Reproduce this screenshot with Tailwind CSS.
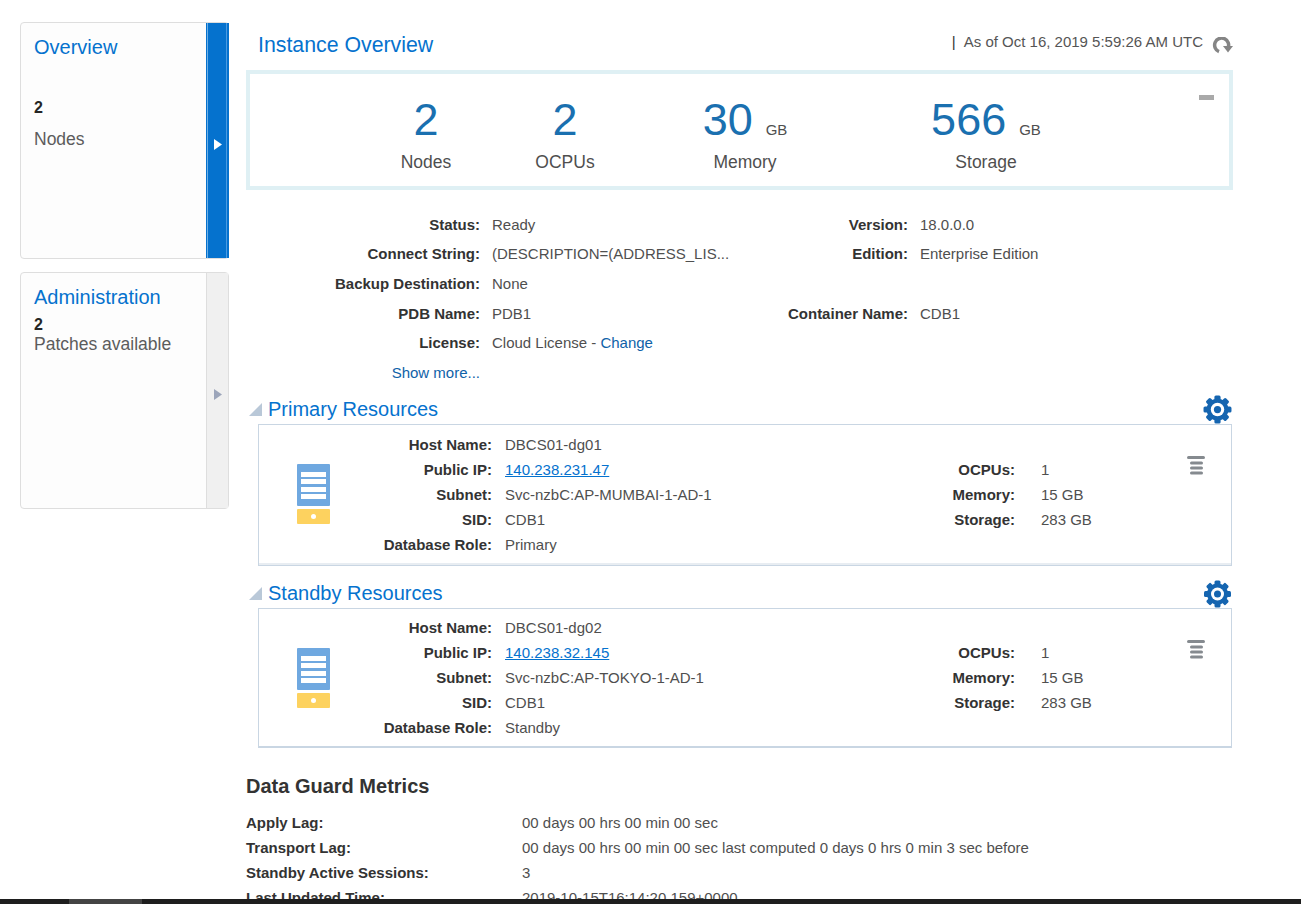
<!DOCTYPE html>
<html lang="en">

<head>
    <meta charset="UTF-8">
    <title>Instance Overview</title>
    <script src="https://cdn.jsdelivr.net/npm/@tailwindcss/browser@4"></script>
</head>

<body class="bg-white">
    <div class="relative flex h-[904px] w-[1301px] overflow-hidden bg-white font-['Liberation_Sans',Arial,sans-serif] text-[15px] text-[#4f4f4f]">

        <!-- side tabs -->
        <div class="ml-5 mt-[22px] flex w-[209px] shrink-0 flex-col gap-[13px]">
            <div class="flex h-[237px] rounded-sm border border-[#dedede] bg-[#fdfdfd]">
                <div class="flex-1 pl-[13px]">
                    <div class="mt-[12px] text-[20px] leading-6 text-[#0572ce]">Overview</div>
                    <div class="mt-[39px] text-[16px] leading-5 font-bold text-[#252525]">2</div>
                    <div class="mt-[11px] text-[17.5px] leading-5 text-[#5c5c5c]">Nodes</div>
                </div>
                <div class="-mr-px flex w-[23px] items-center justify-center bg-[#0572ce] pt-2 shadow-[inset_1px_0_0_#0572ce,inset_2px_0_0_#6fb0e6,inset_-2px_0_0_#0572ce,inset_-3px_0_0_#4b9ae0]">
                    <svg width="8" height="11" viewBox="0 0 8 11"><path d="M0 0 L8 5.5 L0 11 Z" fill="#fff" /></svg>
                </div>
            </div>
            <div class="flex h-[237px] rounded-sm border border-[#dedede] bg-[#fdfdfd]">
                <div class="flex-1 pl-[13px]">
                    <div class="mt-[12px] text-[20px] leading-6 text-[#0572ce]">Administration</div>
                    <div class="mt-[6px] text-[16px] leading-5 font-bold text-[#252525]">2</div>
                    <div class="-mt-px text-[17.5px] leading-5 text-[#5c5c5c]">Patches available</div>
                </div>
                <div class="flex w-[22px] items-center justify-center border-l border-[#dedede] bg-[#f0f0f0] pt-2">
                    <svg width="8" height="11" viewBox="0 0 8 11"><path d="M0 0 L8 5.5 L0 11 Z" fill="#9ca5ba" /></svg>
                </div>
            </div>
        </div>

        <!-- main -->
        <div class="ml-[17px] mt-[22px] w-[987px] shrink-0">
            <div class="flex h-[48px] items-start justify-between pl-3">
                <div class="mt-[11px] text-[21.3px] leading-6 text-[#0572ce]">Instance Overview</div>
                <div class="mt-[11px] flex text-[15px] leading-[18px] text-[#555]">
                    <span class="text-[#333]">|</span>
                    <span class="ml-2">As of Oct 16, 2019 5:59:26 AM UTC</span>
                    <svg class="ml-[9px] mt-[4px]" width="21" height="17" viewBox="0 0 21 17">
                        <path d="M16 11 A7 7 0 1 0 7 14.6" fill="none" stroke="#858585" stroke-width="3.5" />
                        <path d="M11 9 L21 9 L16 15.5 Z" fill="#858585" />
                    </svg>
                </div>
            </div>

            <div class="relative flex h-[120px] border-[4px] border-[#dff0f4] pl-[136px] text-[17.5px]">
                <div class="w-[80px] text-center">
                    <div class="mt-[17px] h-[61px] text-[45px] leading-[58px] text-[#1a70b0]">2</div>
                    <div class="leading-5">Nodes</div>
                </div>
                <div class="ml-[59px] w-[80px] text-center">
                    <div class="mt-[17px] h-[61px] text-[45px] leading-[58px] text-[#1a70b0]">2</div>
                    <div class="leading-5">OCPUs</div>
                </div>
                <div class="ml-[90px] w-[100px] text-center">
                    <div class="mt-[17px] h-[61px] whitespace-nowrap text-[45px] leading-[58px] text-[#1a70b0]">30<span class="ml-[13px] text-[15px] leading-none text-[#4f4f4f]">GB</span></div>
                    <div class="leading-5">Memory</div>
                </div>
                <div class="ml-[131px] w-[120px] text-center">
                    <div class="mt-[17px] h-[61px] whitespace-nowrap text-[45px] leading-[58px] text-[#1a70b0]">566<span class="ml-[13px] text-[15px] leading-none text-[#4f4f4f]">GB</span></div>
                    <div class="leading-5">Storage</div>
                </div>
                <div class="absolute right-[15px] top-[21px] h-[5px] w-[15px] bg-[#a9a9a9]"></div>
            </div>

            <!-- instance details -->
            <div class="mt-5">
                <div class="flex h-[29.7px] items-center">
                    <div class="w-[234px] text-right font-bold text-[#333]">Status:</div>
                    <div class="ml-3 w-[250px]">Ready</div>
                    <div class="w-[166px] text-right font-bold text-[#333]">Version:</div>
                    <div class="ml-3">18.0.0.0</div>
                </div>
                <div class="flex h-[29.7px] items-center">
                    <div class="w-[234px] text-right font-bold text-[#333]">Connect String:</div>
                    <div class="ml-3 w-[250px] whitespace-nowrap">(DESCRIPTION=(ADDRESS_LIS...</div>
                    <div class="w-[166px] text-right font-bold text-[#333]">Edition:</div>
                    <div class="ml-3">Enterprise Edition</div>
                </div>
                <div class="flex h-[29.7px] items-center">
                    <div class="w-[234px] text-right font-bold text-[#333]">Backup Destination:</div>
                    <div class="ml-3">None</div>
                </div>
                <div class="flex h-[29.7px] items-center">
                    <div class="w-[234px] text-right font-bold text-[#333]">PDB Name:</div>
                    <div class="ml-3 w-[250px]">PDB1</div>
                    <div class="w-[166px] text-right font-bold text-[#333]">Container Name:</div>
                    <div class="ml-3">CDB1</div>
                </div>
                <div class="flex h-[29.7px] items-center">
                    <div class="w-[234px] text-right font-bold text-[#333]">License:</div>
                    <div class="ml-3">Cloud License - <span class="text-[#0f62a8]">Change</span></div>
                </div>
                <div class="flex h-[29.7px] items-center">
                    <div class="w-[234px] text-right text-[#0f62a8]">Show more...</div>
                </div>
            </div>

            <!-- primary -->
            <div class="mt-[6.8px] flex h-[29px] items-center justify-between pl-[3px]">
                <div class="flex items-center">
                    <svg width="13" height="13" viewBox="0 0 13 13"><path d="M13 0 L13 13 L0 13 Z" fill="#b9c8d8" /></svg>
                    <span class="ml-[6px] text-[20px] leading-6 text-[#0572ce]">Primary Resources</span>
                </div>
                <svg class="mr-[1px]" width="29" height="29" viewBox="0 0 28 28">
                    <g fill="#1565b0">
                        <circle cx="14" cy="14" r="10.5" />
                        <rect x="11" y="0.5" width="6" height="27" rx="1.5" />
                        <rect x="11" y="0.5" width="6" height="27" rx="1.5" transform="rotate(45 14 14)" />
                        <rect x="11" y="0.5" width="6" height="27" rx="1.5" transform="rotate(90 14 14)" />
                        <rect x="11" y="0.5" width="6" height="27" rx="1.5" transform="rotate(135 14 14)" />
                    </g>
                    <circle cx="14" cy="14" r="6.5" fill="#fff" />
                    <circle cx="14" cy="14" r="3.5" fill="#1565b0" />
                </svg>
            </div>
            <div class="relative ml-3 flex h-[142px] w-[974px] border border-[#c9d6e3] pt-2 shadow-[inset_0_-2px_0_#e8edf2]">
                <div class="ml-[38px] mt-[31px] w-[33px] shrink-0">
                    <div class="flex h-[42px] flex-col gap-[2.5px] rounded-[1px] bg-[#6fa8e0] px-1 pt-2">
                        <div class="h-[5px] bg-white"></div>
                        <div class="h-[5px] bg-white"></div>
                        <div class="h-[5px] bg-white"></div>
                        <div class="h-[5px] bg-white"></div>
                    </div>
                    <div class="mt-[3px] flex h-[15px] items-center justify-center rounded-[1px] bg-[#fdd25f]">
                        <div class="size-[5px] rounded-full bg-white"></div>
                    </div>
                </div>
                <div class="flex-1">
                    <div class="flex h-[25px] items-center">
                        <div class="w-[162px] text-right font-bold text-[#333]">Host Name:</div>
                        <div class="ml-[13px]">DBCS01-dg01</div>
                    </div>
                    <div class="flex h-[25px] items-center">
                        <div class="w-[162px] text-right font-bold text-[#333]">Public IP:</div>
                        <div class="ml-[13px] w-[410px] text-[#0572ce] underline"><span>140.238.231.47</span></div>
                        <div class="w-[100px] text-right font-bold text-[#333]">OCPUs:</div>
                        <div class="ml-[26px]">1</div>
                    </div>
                    <div class="flex h-[25px] items-center">
                        <div class="w-[162px] text-right font-bold text-[#333]">Subnet:</div>
                        <div class="ml-[13px] w-[410px]">Svc-nzbC:AP-MUMBAI-1-AD-1</div>
                        <div class="w-[100px] text-right font-bold text-[#333]">Memory:</div>
                        <div class="ml-[26px]">15 GB</div>
                    </div>
                    <div class="flex h-[25px] items-center">
                        <div class="w-[162px] text-right font-bold text-[#333]">SID:</div>
                        <div class="ml-[13px] w-[410px]">CDB1</div>
                        <div class="w-[100px] text-right font-bold text-[#333]">Storage:</div>
                        <div class="ml-[26px]">283 GB</div>
                    </div>
                    <div class="flex h-[25px] items-center">
                        <div class="w-[162px] text-right font-bold text-[#333]">Database Role:</div>
                        <div class="ml-[13px]">Primary</div>
                    </div>
                </div>
                <svg class="absolute left-[928px] top-[31px]" width="18" height="19" viewBox="0 0 18 19" fill="#858a8f">
                    <rect x="0" y="0" width="18" height="3" rx="1.5" />
                    <rect x="3" y="5.5" width="13" height="3" rx="1.5" />
                    <rect x="3" y="10.5" width="13" height="3" rx="1.5" />
                    <rect x="3" y="15.5" width="13" height="3" rx="1.5" />
                </svg>
            </div>

            <!-- standby -->
            <div class="mt-[14px] flex h-[28px] items-center justify-between pl-[3px]">
                <div class="flex items-center">
                    <svg width="13" height="13" viewBox="0 0 13 13"><path d="M13 0 L13 13 L0 13 Z" fill="#b9c8d8" /></svg>
                    <span class="mb-[2px] ml-[6px] text-[20px] leading-6 text-[#0572ce]">Standby Resources</span>
                </div>
                <svg class="mr-[1px]" width="29" height="28" viewBox="0 0 28 28">
                    <g fill="#1565b0">
                        <circle cx="14" cy="14" r="10.5" />
                        <rect x="11" y="0.5" width="6" height="27" rx="1.5" />
                        <rect x="11" y="0.5" width="6" height="27" rx="1.5" transform="rotate(45 14 14)" />
                        <rect x="11" y="0.5" width="6" height="27" rx="1.5" transform="rotate(90 14 14)" />
                        <rect x="11" y="0.5" width="6" height="27" rx="1.5" transform="rotate(135 14 14)" />
                    </g>
                    <circle cx="14" cy="14" r="6.5" fill="#fff" />
                    <circle cx="14" cy="14" r="3.5" fill="#1565b0" />
                </svg>
            </div>
            <div class="relative ml-3 flex h-[140px] w-[974px] border border-b-2 border-[#c9d6e3] pt-[7px]">
                <div class="ml-[38px] mt-[32px] w-[33px] shrink-0">
                    <div class="flex h-[42px] flex-col gap-[2.5px] rounded-[1px] bg-[#6fa8e0] px-1 pt-2">
                        <div class="h-[5px] bg-white"></div>
                        <div class="h-[5px] bg-white"></div>
                        <div class="h-[5px] bg-white"></div>
                        <div class="h-[5px] bg-white"></div>
                    </div>
                    <div class="mt-[3px] flex h-[15px] items-center justify-center rounded-[1px] bg-[#fdd25f]">
                        <div class="size-[5px] rounded-full bg-white"></div>
                    </div>
                </div>
                <div class="flex-1">
                    <div class="flex h-[25px] items-center">
                        <div class="w-[162px] text-right font-bold text-[#333]">Host Name:</div>
                        <div class="ml-[13px]">DBCS01-dg02</div>
                    </div>
                    <div class="flex h-[25px] items-center">
                        <div class="w-[162px] text-right font-bold text-[#333]">Public IP:</div>
                        <div class="ml-[13px] w-[410px] text-[#0572ce] underline"><span>140.238.32.145</span></div>
                        <div class="w-[100px] text-right font-bold text-[#333]">OCPUs:</div>
                        <div class="ml-[26px]">1</div>
                    </div>
                    <div class="flex h-[25px] items-center">
                        <div class="w-[162px] text-right font-bold text-[#333]">Subnet:</div>
                        <div class="ml-[13px] w-[410px]">Svc-nzbC:AP-TOKYO-1-AD-1</div>
                        <div class="w-[100px] text-right font-bold text-[#333]">Memory:</div>
                        <div class="ml-[26px]">15 GB</div>
                    </div>
                    <div class="flex h-[25px] items-center">
                        <div class="w-[162px] text-right font-bold text-[#333]">SID:</div>
                        <div class="ml-[13px] w-[410px]">CDB1</div>
                        <div class="w-[100px] text-right font-bold text-[#333]">Storage:</div>
                        <div class="ml-[26px]">283 GB</div>
                    </div>
                    <div class="flex h-[25px] items-center">
                        <div class="w-[162px] text-right font-bold text-[#333]">Database Role:</div>
                        <div class="ml-[13px]">Standby</div>
                    </div>
                </div>
                <svg class="absolute left-[928px] top-[31px]" width="18" height="19" viewBox="0 0 18 19" fill="#858a8f">
                    <rect x="0" y="0" width="18" height="3" rx="1.5" />
                    <rect x="3" y="5.5" width="13" height="3" rx="1.5" />
                    <rect x="3" y="10.5" width="13" height="3" rx="1.5" />
                    <rect x="3" y="15.5" width="13" height="3" rx="1.5" />
                </svg>
            </div>

            <!-- data guard -->
            <div class="mt-[24px] text-[20px] leading-7 font-bold text-[#333]">Data Guard Metrics</div>
            <div class="mt-[11px]">
                <div class="flex h-[25px] items-center">
                    <div class="w-[276px] font-bold text-[#333]">Apply Lag:</div>
                    <div>00 days 00 hrs 00 min 00 sec</div>
                </div>
                <div class="flex h-[25px] items-center">
                    <div class="w-[276px] font-bold text-[#333]">Transport Lag:</div>
                    <div>00 days 00 hrs 00 min 00 sec last computed 0 days 0 hrs 0 min 3 sec before</div>
                </div>
                <div class="flex h-[25px] items-center">
                    <div class="w-[276px] font-bold text-[#333]">Standby Active Sessions:</div>
                    <div>3</div>
                </div>
                <div class="flex h-[25px] items-center">
                    <div class="w-[276px] font-bold text-[#333]">Last Updated Time:</div>
                    <div>2019-10-15T16:14:20.159+0000</div>
                </div>
            </div>
        </div>

        <!-- bar from the window below the page -->
        <div class="absolute bottom-0 left-0 h-[5px] w-full bg-[#1e1e1e]">
            <div class="ml-[69px] h-full w-[73px] bg-[#444]"></div>
        </div>
    </div>
</body>

</html>
